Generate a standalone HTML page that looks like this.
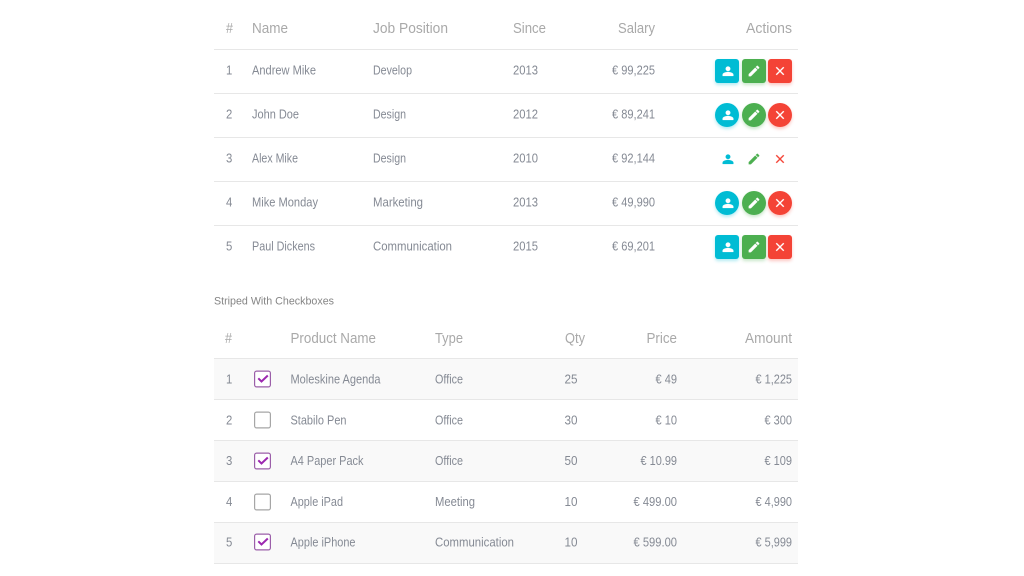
<!DOCTYPE html>
<html lang="en">
<head>
<meta charset="utf-8">
<title>Tables</title>
<style>
html,body{margin:0;padding:0;background:#fff;width:1024px;height:576px;overflow:hidden}
svg.page{position:absolute;left:0;top:0}
text{font-family:"Liberation Sans",sans-serif}
.h{font-size:14.5px;fill:#a9a9a9}
.b{font-size:13px;fill:#858a94}
.n{font-size:12.5px;fill:#858a94}
.c{font-size:11px;fill:#858585}
.btn{position:absolute;width:24px;height:24px;border-radius:3px}
.rd{border-radius:50%}
.btn svg{position:absolute;left:5px;top:5px;width:14px;height:14px;fill:#fff;stroke:#fff;stroke-width:.4}
.i svg{left:5.5px}
.i{background:#00bcd4;box-shadow:0 2px 3px rgba(0,188,212,.3)}
.s{background:#4caf50;box-shadow:0 2px 3px rgba(76,175,80,.3)}
.d{background:#f44336;box-shadow:0 2px 3px rgba(244,67,54,.3)}
.btn.pl{box-shadow:none;background:none}
.pl.i svg{fill:#00bcd4;stroke:#00bcd4;top:4.5px}.pl.s svg{fill:#4caf50;stroke:#4caf50;top:4.5px}.pl.d svg{fill:#f44336;stroke:#f44336;top:4.5px}
</style>
</head>
<body>
<svg class="page" width="1024" height="576" viewBox="0 0 1024 576">
<rect x="214" y="359" width="584" height="40" fill="#f9f9f9"/>
<rect x="214" y="441" width="584" height="40" fill="#f9f9f9"/>
<rect x="214" y="523" width="584" height="40" fill="#f9f9f9"/>
<g fill="#e7e7e7">
<rect x="214" y="49" width="584" height="1"/>
<rect x="214" y="93" width="584" height="1"/>
<rect x="214" y="137" width="584" height="1"/>
<rect x="214" y="181" width="584" height="1"/>
<rect x="214" y="225" width="584" height="1"/>
<rect x="214" y="358" width="584" height="1"/>
<rect x="214" y="399" width="584" height="1"/>
<rect x="214" y="440" width="584" height="1"/>
<rect x="214" y="481" width="584" height="1"/>
<rect x="214" y="522" width="584" height="1"/>
<rect x="214" y="563" width="584" height="1"/>
</g>

<text class="h" x="226" y="33" textLength="7" lengthAdjust="spacingAndGlyphs">#</text>
<text class="h" x="252" y="33" textLength="36" lengthAdjust="spacingAndGlyphs">Name</text>
<text class="h" x="373" y="33" textLength="75" lengthAdjust="spacingAndGlyphs">Job Position</text>
<text class="h" x="513" y="33" textLength="33" lengthAdjust="spacingAndGlyphs">Since</text>
<text class="h" x="618" y="33" textLength="37" lengthAdjust="spacingAndGlyphs">Salary</text>
<text class="h" x="746" y="33" textLength="46" lengthAdjust="spacingAndGlyphs">Actions</text>

<text class="n" x="226" y="74.500" textLength="6.300" lengthAdjust="spacingAndGlyphs">1</text>
<text class="b" x="252" y="74.500" textLength="64" lengthAdjust="spacingAndGlyphs">Andrew Mike</text>
<text class="b" x="373" y="74.500" textLength="39" lengthAdjust="spacingAndGlyphs">Develop</text>
<text class="b" x="513" y="74.500" textLength="25" lengthAdjust="spacingAndGlyphs">2013</text>
<text class="b" x="612" y="74.500" textLength="43" lengthAdjust="spacingAndGlyphs">€ 99,225</text>

<text class="n" x="226" y="118.500" textLength="6.300" lengthAdjust="spacingAndGlyphs">2</text>
<text class="b" x="252" y="118.500" textLength="47" lengthAdjust="spacingAndGlyphs">John Doe</text>
<text class="b" x="373" y="118.500" textLength="33" lengthAdjust="spacingAndGlyphs">Design</text>
<text class="b" x="513" y="118.500" textLength="25" lengthAdjust="spacingAndGlyphs">2012</text>
<text class="b" x="612" y="118.500" textLength="43" lengthAdjust="spacingAndGlyphs">€ 89,241</text>

<text class="n" x="226" y="162.500" textLength="6.300" lengthAdjust="spacingAndGlyphs">3</text>
<text class="b" x="252" y="162.500" textLength="46" lengthAdjust="spacingAndGlyphs">Alex Mike</text>
<text class="b" x="373" y="162.500" textLength="33" lengthAdjust="spacingAndGlyphs">Design</text>
<text class="b" x="513" y="162.500" textLength="25" lengthAdjust="spacingAndGlyphs">2010</text>
<text class="b" x="612" y="162.500" textLength="43" lengthAdjust="spacingAndGlyphs">€ 92,144</text>

<text class="n" x="226" y="206.500" textLength="6.300" lengthAdjust="spacingAndGlyphs">4</text>
<text class="b" x="252" y="206.500" textLength="66" lengthAdjust="spacingAndGlyphs">Mike Monday</text>
<text class="b" x="373" y="206.500" textLength="50" lengthAdjust="spacingAndGlyphs">Marketing</text>
<text class="b" x="513" y="206.500" textLength="25" lengthAdjust="spacingAndGlyphs">2013</text>
<text class="b" x="612" y="206.500" textLength="43" lengthAdjust="spacingAndGlyphs">€ 49,990</text>

<text class="n" x="226" y="250.500" textLength="6.300" lengthAdjust="spacingAndGlyphs">5</text>
<text class="b" x="252" y="250.500" textLength="63" lengthAdjust="spacingAndGlyphs">Paul Dickens</text>
<text class="b" x="373" y="250.500" textLength="79" lengthAdjust="spacingAndGlyphs">Communication</text>
<text class="b" x="513" y="250.500" textLength="25" lengthAdjust="spacingAndGlyphs">2015</text>
<text class="b" x="612" y="250.500" textLength="43" lengthAdjust="spacingAndGlyphs">€ 69,201</text>

<text class="c" x="214" y="304.500" textLength="120" lengthAdjust="spacingAndGlyphs">Striped With Checkboxes</text>

<text class="h" x="225" y="343" textLength="7" lengthAdjust="spacingAndGlyphs">#</text>
<text class="h" x="290.500" y="343" textLength="85.500" lengthAdjust="spacingAndGlyphs">Product Name</text>
<text class="h" x="435" y="343" textLength="28" lengthAdjust="spacingAndGlyphs">Type</text>
<text class="h" x="565" y="343" textLength="20" lengthAdjust="spacingAndGlyphs">Qty</text>
<text class="h" x="646.500" y="343" textLength="30.500" lengthAdjust="spacingAndGlyphs">Price</text>
<text class="h" x="745" y="343" textLength="47" lengthAdjust="spacingAndGlyphs">Amount</text>

<text class="n" x="226" y="383.500" textLength="6.300" lengthAdjust="spacingAndGlyphs">1</text>
<text class="b" x="290.500" y="383.500" textLength="90" lengthAdjust="spacingAndGlyphs">Moleskine Agenda</text>
<text class="b" x="435" y="383.500" textLength="28" lengthAdjust="spacingAndGlyphs">Office</text>
<text class="b" x="564.500" y="383.500" textLength="13" lengthAdjust="spacingAndGlyphs">25</text>
<text class="b" x="655.500" y="383.500" textLength="21.500" lengthAdjust="spacingAndGlyphs">€ 49</text>
<text class="b" x="755.500" y="383.500" textLength="36.500" lengthAdjust="spacingAndGlyphs">€ 1,225</text>

<text class="n" x="226" y="424.500" textLength="6.300" lengthAdjust="spacingAndGlyphs">2</text>
<text class="b" x="290.500" y="424.500" textLength="56" lengthAdjust="spacingAndGlyphs">Stabilo Pen</text>
<text class="b" x="435" y="424.500" textLength="28" lengthAdjust="spacingAndGlyphs">Office</text>
<text class="b" x="564.500" y="424.500" textLength="13" lengthAdjust="spacingAndGlyphs">30</text>
<text class="b" x="655.500" y="424.500" textLength="21.500" lengthAdjust="spacingAndGlyphs">€ 10</text>
<text class="b" x="764.500" y="424.500" textLength="27.500" lengthAdjust="spacingAndGlyphs">€ 300</text>

<text class="n" x="226" y="465" textLength="6.300" lengthAdjust="spacingAndGlyphs">3</text>
<text class="b" x="290.500" y="465" textLength="73" lengthAdjust="spacingAndGlyphs">A4 Paper Pack</text>
<text class="b" x="435" y="465" textLength="28" lengthAdjust="spacingAndGlyphs">Office</text>
<text class="b" x="564.500" y="465" textLength="13" lengthAdjust="spacingAndGlyphs">50</text>
<text class="b" x="640.500" y="465" textLength="36.500" lengthAdjust="spacingAndGlyphs">€ 10.99</text>
<text class="b" x="764.500" y="465" textLength="27.500" lengthAdjust="spacingAndGlyphs">€ 109</text>

<text class="n" x="226" y="506" textLength="6.300" lengthAdjust="spacingAndGlyphs">4</text>
<text class="b" x="290.500" y="506" textLength="52.500" lengthAdjust="spacingAndGlyphs">Apple iPad</text>
<text class="b" x="435" y="506" textLength="40" lengthAdjust="spacingAndGlyphs">Meeting</text>
<text class="b" x="564.500" y="506" textLength="13" lengthAdjust="spacingAndGlyphs">10</text>
<text class="b" x="633.500" y="506" textLength="43.500" lengthAdjust="spacingAndGlyphs">€ 499.00</text>
<text class="b" x="755.500" y="506" textLength="36.500" lengthAdjust="spacingAndGlyphs">€ 4,990</text>

<text class="n" x="226" y="546.500" textLength="6.300" lengthAdjust="spacingAndGlyphs">5</text>
<text class="b" x="290.500" y="546.500" textLength="65" lengthAdjust="spacingAndGlyphs">Apple iPhone</text>
<text class="b" x="435" y="546.500" textLength="79" lengthAdjust="spacingAndGlyphs">Communication</text>
<text class="b" x="564.500" y="546.500" textLength="13" lengthAdjust="spacingAndGlyphs">10</text>
<text class="b" x="633.500" y="546.500" textLength="43.500" lengthAdjust="spacingAndGlyphs">€ 599.00</text>
<text class="b" x="755.500" y="546.500" textLength="36.500" lengthAdjust="spacingAndGlyphs">€ 5,999</text>

<g fill="#fff" stroke-width="1.200">
<rect x="254.600" y="371.100" width="15.800" height="15.800" rx="2" stroke="#9b5fa9"/>
<path d="M258.300 378.300l3.200 3.200 6.300-6" fill="none" stroke="#9c27b0" stroke-width="2"/>
<rect x="254.600" y="412.100" width="15.800" height="15.800" rx="2" stroke="#a6a6a6"/>
<rect x="254.600" y="453.100" width="15.800" height="15.800" rx="2" stroke="#9b5fa9"/>
<path d="M258.300 460.300l3.200 3.200 6.300-6" fill="none" stroke="#9c27b0" stroke-width="2"/>
<rect x="254.600" y="494.100" width="15.800" height="15.800" rx="2" stroke="#a6a6a6"/>
<rect x="254.600" y="534.100" width="15.800" height="15.800" rx="2" stroke="#9b5fa9"/>
<path d="M258.300 541.300l3.200 3.200 6.300-6" fill="none" stroke="#9c27b0" stroke-width="2"/>
</g>
</svg>

<div class="btn i" style="left:715px;top:59px"><svg viewBox="0 0 24 24"><path d="M12 12.200a4 4 0 1 0 0-8 4 4 0 0 0 0 8zM2.800 20.500v-2.300c0-3 6-4.400 9.200-4.400s9.200 1.400 9.200 4.400v2.300z"/></svg></div>
<div class="btn s" style="left:741.700px;top:59px"><svg viewBox="0 0 24 24"><path d="M3 17.250V21h3.750L17.810 9.940l-3.750-3.750L3 17.250zM20.710 7.040c.39-.39.39-1.020 0-1.410l-2.340-2.340c-.39-.39-1.020-.39-1.410 0l-1.830 1.830 3.750 3.750 1.830-1.830z"/></svg></div>
<div class="btn d" style="left:768px;top:59px"><svg viewBox="0 0 24 24"><path d="M19 6.410L17.590 5 12 10.590 6.410 5 5 6.410 10.590 12 5 17.590 6.410 19 12 13.410 17.590 19 19 17.590 13.410 12z"/></svg></div>

<div class="btn rd i" style="left:715px;top:103px"><svg viewBox="0 0 24 24"><path d="M12 12.200a4 4 0 1 0 0-8 4 4 0 0 0 0 8zM2.800 20.500v-2.300c0-3 6-4.400 9.200-4.400s9.200 1.400 9.200 4.400v2.300z"/></svg></div>
<div class="btn rd s" style="left:741.700px;top:103px"><svg viewBox="0 0 24 24"><path d="M3 17.250V21h3.750L17.810 9.940l-3.750-3.750L3 17.250zM20.710 7.040c.39-.39.39-1.020 0-1.410l-2.340-2.340c-.39-.39-1.020-.39-1.410 0l-1.830 1.830 3.750 3.750 1.830-1.830z"/></svg></div>
<div class="btn rd d" style="left:768px;top:103px"><svg viewBox="0 0 24 24"><path d="M19 6.410L17.590 5 12 10.590 6.410 5 5 6.410 10.590 12 5 17.590 6.410 19 12 13.410 17.590 19 19 17.590 13.410 12z"/></svg></div>

<div class="btn pl i" style="left:715px;top:147px"><svg viewBox="0 0 24 24"><path d="M12 12.200a4 4 0 1 0 0-8 4 4 0 0 0 0 8zM2.800 20.500v-2.300c0-3 6-4.400 9.200-4.400s9.200 1.400 9.200 4.400v2.300z"/></svg></div>
<div class="btn pl s" style="left:741.700px;top:147px"><svg viewBox="0 0 24 24"><path d="M3 17.250V21h3.750L17.810 9.940l-3.750-3.750L3 17.250zM20.710 7.040c.39-.39.39-1.020 0-1.410l-2.340-2.340c-.39-.39-1.020-.39-1.410 0l-1.830 1.830 3.750 3.750 1.830-1.830z"/></svg></div>
<div class="btn pl d" style="left:768px;top:147px"><svg viewBox="0 0 24 24"><path d="M19 6.410L17.590 5 12 10.590 6.410 5 5 6.410 10.590 12 5 17.590 6.410 19 12 13.410 17.590 19 19 17.590 13.410 12z"/></svg></div>

<div class="btn rd i" style="left:715px;top:191px"><svg viewBox="0 0 24 24"><path d="M12 12.200a4 4 0 1 0 0-8 4 4 0 0 0 0 8zM2.800 20.500v-2.300c0-3 6-4.400 9.200-4.400s9.200 1.400 9.200 4.400v2.300z"/></svg></div>
<div class="btn rd s" style="left:741.700px;top:191px"><svg viewBox="0 0 24 24"><path d="M3 17.250V21h3.750L17.810 9.940l-3.750-3.750L3 17.250zM20.710 7.040c.39-.39.39-1.020 0-1.410l-2.340-2.340c-.39-.39-1.020-.39-1.410 0l-1.830 1.830 3.750 3.750 1.830-1.830z"/></svg></div>
<div class="btn rd d" style="left:768px;top:191px"><svg viewBox="0 0 24 24"><path d="M19 6.410L17.590 5 12 10.590 6.410 5 5 6.410 10.590 12 5 17.590 6.410 19 12 13.410 17.590 19 19 17.590 13.410 12z"/></svg></div>

<div class="btn i" style="left:715px;top:235px"><svg viewBox="0 0 24 24"><path d="M12 12.200a4 4 0 1 0 0-8 4 4 0 0 0 0 8zM2.800 20.500v-2.300c0-3 6-4.400 9.200-4.400s9.200 1.400 9.200 4.400v2.300z"/></svg></div>
<div class="btn s" style="left:741.700px;top:235px"><svg viewBox="0 0 24 24"><path d="M3 17.250V21h3.750L17.810 9.940l-3.750-3.750L3 17.250zM20.710 7.040c.39-.39.39-1.020 0-1.410l-2.340-2.340c-.39-.39-1.020-.39-1.410 0l-1.830 1.830 3.750 3.750 1.830-1.830z"/></svg></div>
<div class="btn d" style="left:768px;top:235px"><svg viewBox="0 0 24 24"><path d="M19 6.410L17.590 5 12 10.590 6.410 5 5 6.410 10.590 12 5 17.590 6.410 19 12 13.410 17.590 19 19 17.590 13.410 12z"/></svg></div>
</body>
</html>
